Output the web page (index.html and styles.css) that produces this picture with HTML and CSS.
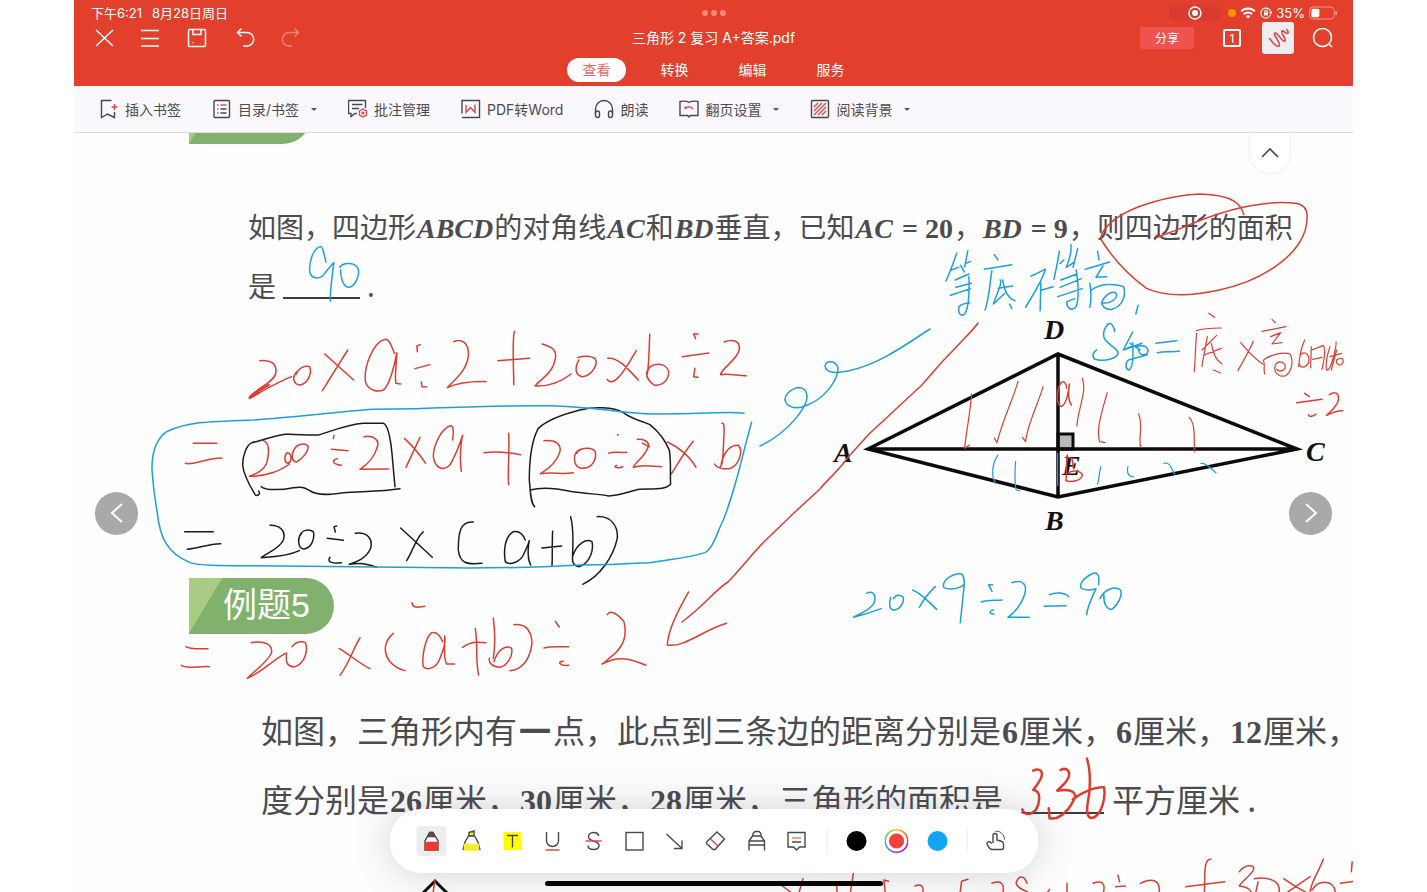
FILE: index.html
```html
<!DOCTYPE html>
<html lang="zh-CN">
<head>
  <meta charset="UTF-8" />
  <meta name="viewport" content="width=device-width, initial-scale=1" />
  <title>三角形 2 复习 A+答案.pdf</title>
  <link rel="stylesheet" href="styles.css">
</head>
<body>

<div class="app">

  <header class="header">
    <div class="status">
      <div class="status-left"><span>下午6:21</span><span>8月28日周日</span></div>
      <div class="dots"><i></i><i></i><i></i></div>
      <div class="status-right">
        <span class="record">
          <svg width="14" height="14" viewBox="0 0 14 14"><circle cx="7" cy="7" r="6" fill="none" stroke="#fff" stroke-width="1.4"/><circle cx="7" cy="7" r="3" fill="#fff"/></svg>
        </span>
        <span class="mic-dot"></span>
        <svg width="16" height="12" viewBox="0 0 16 12" fill="none" stroke="#fff" stroke-width="2"><path d="M1.2 4.4a9.6 9.6 0 0 1 13.6 0M3.8 7.2a6 6 0 0 1 8.4 0"/><path d="M5.8 9.3a3.2 3.2 0 0 1 4.4 0L8 11.6z" fill="#fff" stroke="none"/></svg>
        <svg width="12" height="12" viewBox="0 0 12 12" fill="none" stroke="#fff" stroke-width="1.1"><path d="M10.6 4.6A5 5 0 1 0 10.6 7.6M9.2 5.4l1.7.9 1-1.7"/><rect x="4" y="5.4" width="4" height="3" fill="#fff" stroke="none"/><path d="M4.8 5.6V4.4a1.2 1.2 0 0 1 2.4 0v1.2"/></svg>
        <span>35%</span>
        <svg width="28" height="14" viewBox="0 0 28 14"><rect x=".6" y="1" width="24.6" height="12" rx="3.4" fill="none" stroke="#f29a8f"/><rect x="2.4" y="2.8" width="8" height="8.4" rx="1.6" fill="#fff"/><path d="M26.4 5v4a2 2 0 0 0 0-4z" fill="#f29a8f"/></svg>
      </div>
    </div>

    <div class="title-row">
      <div class="title-left">
        <button class="icon-btn" aria-label="关闭"><svg viewBox="0 0 24 24"><path d="M4 4l17 16M21 4L4 20"/></svg></button>
        <button class="icon-btn" aria-label="菜单"><svg viewBox="0 0 24 24"><path d="M2 4.500h18M2 12.500h18M2 20h18"/></svg></button>
        <button class="icon-btn" aria-label="保存"><svg viewBox="0 0 24 24"><rect x="2.500" y="3.500" width="17" height="17" rx="1"/><path d="M7 4v4.500h8V4M6.500 16.500h1"/></svg></button>
        <button class="icon-btn" aria-label="撤销"><svg viewBox="0 0 24 24"><path d="M8.500 2.500L4.500 6.500l4 4M4.500 6.500H14a6.600 6.600 0 0 1 0 13.500H10"/></svg></button>
        <button class="icon-btn faded" aria-label="重做" disabled><svg viewBox="0 0 24 24"><path d="M14.500 2.500l4 4-4 4M18.500 6.500H9a6.600 6.600 0 0 0 0 13.500H12"/></svg></button>
      </div>
      <h1 class="title">三角形 2 复习 A+答案.pdf</h1>
      <div class="title-right">
        <button class="share">分享</button>
        <button class="page-btn" aria-label="页面"><span>1</span></button>
        <button class="pen-btn" aria-label="手写批注"><svg viewBox="0 0 32 32"><path d="M7 16c3 3 7 10 10 8 3-3-7-11-4-13 3-1 7 10 10 8 2-2-5-8-3-10 2-1 4 4 6 2 1-2-2-3-1-4"/></svg></button>
        <button class="icon-btn" aria-label="搜索"><svg viewBox="0 0 24 24"><circle cx="11.500" cy="11.500" r="9"/><path d="M18 18l3 3"/></svg></button>
      </div>
    </div>

    <nav class="tabs">
      <button class="tab active">查看</button>
      <button class="tab">转换</button>
      <button class="tab">编辑</button>
      <button class="tab">服务</button>
    </nav>
  </header>

  <div class="toolbar">
    <button class="tool"><svg viewBox="0 0 20 20"><path d="M12.500 1.500h-10v17l6-3.500 7 3.500V13"/><path class="red" d="M12.500 8h6M15.500 5v6"/></svg><span>插入书签</span></button>
    <button class="tool"><svg viewBox="0 0 20 20"><rect x="2" y="1.500" width="15.500" height="17" rx="1"/><path class="red" d="M5 6h1.500M5 10h1.500M5 14h1.500"/><path class="red" d="M8.500 6h6"/><path d="M8.500 10h6M8.500 14h6"/></svg><span>目录/书签</span><i class="caret"></i></button>
    <button class="tool"><svg viewBox="0 0 20 20"><path d="M17.500 9V1.500h-17v13H3v3l4-3h2M4 5.500h10.500M4 9.500h7"/><path class="red" d="M11.500 12l3.500-2 3.500 2v4l-3.500 2-3.500-2z"/><circle class="red" cx="15" cy="14" r=".8"/></svg><span>批注管理</span></button>
    <button class="tool"><svg viewBox="0 0 20 20"><path d="M1 14.500v-13h17.500v17H1"/><path class="red" d="M5 6v7.500l4.500-5 4.500 5V5.500"/></svg><span>PDF转Word</span></button>
    <button class="tool"><svg viewBox="0 0 20 20"><path d="M1.500 15v-5a8.500 8.500 0 0 1 17 0v5"/><rect x="1.500" y="12" width="4" height="6.500" rx="2"/><rect x="14.500" y="12" width="4" height="6.500" rx="2"/></svg><span>朗读</span></button>
    <button class="tool"><svg viewBox="0 0 20 20"><path d="M10 3.500C8 2 4 2 1 2.500v14h7.500l1.500 1.500 1.500-1.500H19v-14c-3-.5-7-.5-9 1"/><path class="red" d="M6 10c2-3 6-3 8 0M6.200 7.500V10"/></svg><span>翻页设置</span><i class="caret"></i></button>
    <button class="tool"><svg viewBox="0 0 20 20"><rect x="1.500" y="1.500" width="17" height="17" rx="1"/><path class="red" d="M4 8l4-4M4 12l8-8M4 16L16 4M8 16l8-8M12 16l4-4"/></svg><span>阅读背景</span><i class="caret"></i></button>
  </div>

  <main class="viewer">

    <article class="page">
      <div class="badge badge-top"></div>
      <p class="question">如图，四边形<i>ABCD</i>的对角线<i>AC</i>和<i>BD</i>垂直，已知<i>AC</i><b> = 20</b>，<i>BD</i><b> = 9</b>，则四边形的面积<br>是<span class="blank"></span>.</p>
      <h2 class="badge">例题5</h2>
      <p class="question large">如图，三角形内有<strong>一</strong>点，此点到三条边的距离分别是<b>6</b>厘米，<b>6</b>厘米，<b>12</b>厘米，<br>度分别是<b>26</b>厘米，<b>30</b>厘米，<b>28</b>厘米，三角形的面积是<span class="blank"></span>平方厘米 .</p>
    </article>

    <!-- Figure of the quadrilateral -->
    <svg class="layer" width="1279" height="759" viewBox="74 133 1279 759">
      <g fill="none" stroke="#0b0b0b" stroke-width="3.500">
        <rect x="1058" y="434" width="15" height="15" fill="#b9b9bd" stroke-width="3"/>
        <path d="M868 449L1058 354L1297 449L1058 497ZM868 449H1297M1058 354V497"/>
        <path d="M423 893L435 881L447 893" stroke-width="3"/>
      </g>
      <g class="point">
        <text x="834" y="462">A</text>
        <text x="1044" y="339">D</text>
        <text x="1306" y="461">C</text>
        <text x="1045" y="530">B</text>
        <text x="1062" y="475">E</text>
      </g>
    </svg>

    <!-- Freehand pen strokes -->
    <svg class="layer ink" width="1279" height="759" viewBox="74 133 1279 759" role="img" aria-label="手写批注">
      <g transform="matrix(.3954 0 0 .3333 150 190)">
        <path class="blue" d="M445 216C438 180 436 168 430 170C412 178 402 215 404 245C408 268 430 270 442 250C455 230 462 222 465 218C462 250 455 300 456 334M480 232C490 215 525 215 528 245C526 275 512 292 502 292C488 290 482 262 482 240"/>
        <path class="red" d="M278 512C305 510 322 520 318 550C312 580 260 600 252 624C290 600 325 575 358 560M372 545C358 560 362 584 380 585C400 580 410 550 404 530C390 525 375 535 370 552M442 492L515 570M500 480L436 602M618 490C610 465 605 448 595 448C565 455 540 530 545 575C550 600 575 608 590 600C605 590 620 520 624 488C624 520 618 560 622 580L634 582"/>
        <path class="red bold" d="M300 585C280 600 258 610 252 624L275 608"/>
        <path class="red" d="M684 464L675 468L676 485M670 536L708 524M686 576L688 590L700 591M768 455C790 445 808 460 805 500C800 545 765 575 752 593C780 578 815 574 850 575M880 512L960 505M922 424C915 440 920 540 920 584"/>
        <path class="red" d="M992 462C1015 470 1030 480 1025 505C1020 550 985 570 974 588C1010 590 1040 575 1065 552M1085 510C1070 540 1080 560 1095 560C1120 555 1135 520 1125 505C1115 497 1095 497 1082 503M1158 505C1185 500 1215 545 1235 570M1230 482C1210 520 1175 600 1156 568"/>
        <path class="red" d="M1264 432C1262 480 1262 540 1256 560M1256 548C1265 515 1305 515 1312 545C1312 575 1290 590 1275 585C1262 575 1256 560 1256 548M1386 432L1375 432L1380 446M1346 500L1413 489M1378 535L1375 560L1386 562M1452 456C1475 445 1495 455 1490 480C1485 510 1445 535 1443 554C1465 550 1490 558 1508 557"/>
      </g>

      <g transform="translate(150 390) scale(.3333)">
        <path class="red" d="M130 160L200 160M106 220C130 228 160 205 216 204M340 152C360 160 358 190 350 220C340 245 310 255 298 259C350 260 395 240 418 222M440 168C420 190 425 215 440 216C460 205 478 180 474 168C460 155 435 165 430 185M412 188C402 195 402 218 414 220C428 215 425 190 412 188M552 136L550 146M544 178L594 182M562 206C545 210 545 222 574 226M642 140C670 135 690 150 682 170C675 200 650 225 630 238L716 237"/>
        <path class="red" d="M764 146C785 165 810 195 827 220M810 142L768 232M908 150C912 120 910 105 900 108C875 115 850 165 850 200C855 235 880 245 900 225C915 200 930 160 938 136C930 170 930 220 934 244M1002 188C1040 182 1080 188 1112 194M1076 130C1080 180 1072 240 1076 284"/>
        <path class="red" d="M1182 152C1215 150 1235 160 1230 185C1222 215 1190 240 1172 251C1210 246 1240 254 1270 248M1290 178C1265 190 1270 232 1295 235C1330 236 1340 205 1336 185C1325 170 1290 172 1280 190M1402 134l3 1M1376 190C1390 182 1410 190 1430 187M1400 226C1385 232 1410 236 1418 230M1462 148C1478 145 1495 155 1496 165C1490 200 1455 215 1450 232C1480 222 1510 230 1535 230M1478 160L1498 170"/>
        <path class="red" d="M1552 156C1585 170 1620 200 1638 232M1630 154C1600 190 1585 220 1564 252M1716 100C1726 95 1722 130 1720 180C1718 210 1718 225 1710 232M1714 220C1725 180 1745 165 1765 166C1780 180 1770 220 1745 234C1725 240 1700 235 1694 222"/>
        <path class="black" d="M326 304C335 315 318 320 314 312C295 280 280 250 278 225C278 195 290 165 306 158C340 150 370 138 405 133C440 132 470 136 505 135C550 122 590 104 640 100L700 100C715 105 722 150 726 190L735 290M334 290C345 302 400 300 425 294C460 288 465 294 480 302C500 318 540 314 580 308C640 304 700 304 750 296"/>
        <path class="black" d="M1140 300C1180 290 1220 295 1260 304C1310 312 1350 312 1375 318C1420 316 1440 302 1470 298C1510 296 1550 300 1562 282C1560 250 1564 210 1558 180C1545 150 1520 120 1500 104C1475 92 1450 90 1420 68C1390 50 1330 50 1290 60C1230 75 1190 92 1165 115C1140 160 1138 230 1138 270C1142 310 1142 340 1154 350"/>
        <path class="black" d="M104 425L190 425M112 478C150 475 170 462 212 461M360 406C385 405 410 420 400 450C390 475 350 490 334 503C370 500 410 500 448 482M455 430C440 445 445 475 460 477C485 475 495 445 490 425C475 415 455 420 448 440M560 408L552 410L556 426M532 445L580 451M540 502C530 515 545 522 574 518M616 430C650 425 670 445 662 475C650 505 620 515 598 523C630 518 650 520 680 532M752 414L847 502M820 426C800 440 785 490 770 512"/>
        <path class="black" d="M970 396C930 392 925 430 925 480C930 520 950 525 996 520M1126 450C1118 430 1105 422 1090 425C1065 440 1060 480 1066 515C1080 528 1110 515 1120 495C1130 475 1136 460 1138 452C1132 480 1134 510 1142 525M1176 474L1235 468M1208 424C1206 460 1208 500 1206 528M1262 380C1275 430 1266 480 1268 515M1268 500C1280 460 1310 445 1326 455C1332 480 1320 520 1288 530C1270 528 1266 515 1268 500M1342 380C1385 378 1405 410 1402 445C1390 500 1350 560 1298 583"/>
        <path class="blue" d="M1782 70C1740 62 1700 72 1500 72C1400 68 1330 50 1200 47C1000 46 880 54 800 56L670 58C560 66 430 82 310 90C180 94 110 95 50 125C15 150 5 190 6 240C10 300 15 330 22 370C30 440 50 490 120 518C160 530 250 526 400 528L960 534C1100 534 1200 530 1290 525C1400 525 1460 520 1500 518C1580 505 1620 503 1665 488C1690 475 1700 430 1720 390C1760 290 1770 220 1805 97"/>
        <path class="red" d="M786 638C788 656 805 652 824 649M108 770C125 780 150 776 174 776M94 826C105 838 150 828 178 830M304 758C345 750 370 765 364 790C350 820 310 845 292 865C330 850 370 810 406 790M410 790C405 820 415 832 435 830C465 820 475 780 466 758C450 752 435 760 426 770M568 776C600 795 635 825 660 836M630 744C610 775 595 825 570 856"/>
        <path class="red" d="M730 730C700 755 700 790 720 815C735 832 750 838 765 842M878 755C870 735 860 725 845 728C825 745 815 800 820 830C835 845 860 830 868 810C880 780 888 760 884 738C885 770 880 810 890 822L914 822M938 772C960 755 980 755 1008 758M976 716C984 760 976 810 986 855M1030 685C1036 730 1034 780 1030 805M1032 815C1045 775 1070 765 1085 775C1090 800 1070 828 1050 832C1030 832 1015 820 1018 805M1092 704C1120 700 1145 715 1146 760C1140 810 1115 840 1080 842"/>
        <path class="red" d="M1216 694L1228 711M1182 774C1205 768 1230 772 1256 770M1240 814C1220 815 1230 828 1256 826M1372 674C1380 660 1400 668 1422 695C1432 735 1420 770 1390 795C1375 806 1365 818 1356 822C1400 800 1430 800 1488 826M1616 606C1580 670 1555 720 1552 765C1600 775 1660 720 1730 700"/>
      </g>

      <!-- connectors between the notes -->
      <path class="blue" d="M760 446C790 432 808 405 807 396C806 385 795 386 788 393C780 402 790 410 802 407C825 400 838 380 838 368C836 360 826 360 825 366C826 374 838 373 848 371C880 364 905 345 930 329"/>
      <path class="red" d="M978 323C970 335 955 345 921 386C905 400 885 420 870 433L850 455C835 475 822 485 820 489L795 512L768 538C755 550 740 570 728 582C715 590 705 605 682 622"/>

      <g transform="matrix(.3827 0 0 .3333 760 180)">
        <path class="red" d="M1264 104C1258 75 1240 45 1150 42C1080 45 970 75 920 125C900 145 888 165 892 180C930 250 980 300 1010 325C1060 350 1130 348 1200 330C1300 305 1400 240 1425 150C1435 100 1430 75 1400 70C1300 58 1200 95 1110 140C1080 155 1050 165 1036 173"/>
        <path class="blue" d="M514 220C505 250 495 280 486 303M500 270L518 262M543 212L535 260M538 250L550 244M524 256L534 276M510 300L546 282M512 322L552 310M498 346L550 326M546 290C548 350 545 385 534 404C520 410 518 395 520 380C528 370 540 370 548 368"/>
        <path class="blue" d="M612 224L622 240M586 268L658 254M606 272C600 310 600 350 588 390M628 300C635 310 618 340 610 372L640 340M622 325L660 318M634 300C640 340 650 355 666 362M652 372L658 386M708 288C730 280 740 268 746 268C735 310 710 350 694 382M734 310L732 392M736 330L766 320"/>
        <path class="blue" d="M782 214C778 250 772 275 768 298M784 250L794 240M812 194C816 220 806 245 800 262M830 206L818 262M800 262L822 246M786 300L828 282M784 322L840 296M778 350L842 326M826 270C832 310 835 350 826 380C815 395 800 385 802 365L822 356"/>
        <path class="blue" d="M882 214L886 240M850 268L914 246M896 258L878 292L906 290M862 310C866 340 864 370 862 382M866 330C890 310 925 310 950 320C958 350 945 380 920 388C900 390 888 375 896 360C910 335 930 330 932 345C930 365 905 372 892 368M988 376L982 402"/>
      </g>

      <g transform="matrix(.3444 0 0 .3333 820 310)">
        <path class="red thin" d="M440 252C438 300 425 360 420 415L434 405M575 214C560 270 530 330 514 398L506 384M648 230C630 290 600 350 597 395L588 382M762 205C775 250 750 290 746 348M834 248C820 300 800 360 812 395L828 398M925 312C940 350 922 390 932 412M1072 322C1090 340 1086 380 1087 424"/>
        <path class="red" d="M716 235C715 215 705 208 696 225C685 250 688 285 700 290C715 285 722 240 724 222C720 250 722 275 730 285M718 435C715 470 716 500 714 512C730 518 760 512 762 495C755 480 730 480 720 490M716 440L732 446L736 476"/>
        <path class="blue thin" d="M516 436C500 460 496 500 510 520M568 454C565 490 566 530 570 540L580 542M690 430L690 526M815 470C810 495 810 510 806 522M894 470C890 490 896 500 910 500M998 460C1020 455 1020 480 1030 492M1106 460C1125 458 1135 478 1150 488"/>
      </g>

      <g transform="translate(1070 300) scale(.3333)">
        <path class="blue" d="M134 95C130 70 118 62 108 80C85 120 120 130 140 150C160 175 100 185 75 178C65 170 68 158 80 150M188 96L160 150L182 140M160 150L216 130M188 128C190 160 190 200 178 210C165 208 165 190 175 180L232 164M200 140C230 130 240 150 230 162C215 168 205 160 205 148M180 130L210 150M258 130L320 122M262 158C290 152 300 158 328 154"/>
        <path class="red thin" d="M416 40L434 52M380 92C400 84 430 84 454 84M380 100C376 140 376 180 373 214M412 110C405 150 400 170 396 200M396 150L440 106M402 165L454 145M424 130C430 170 445 185 456 192M430 210L452 219M512 128C530 150 560 180 578 192M550 124C535 160 515 190 504 212M606 58L616 68M576 94L648 80M602 110L632 98L606 132L636 128M580 180C586 190 580 210 584 222M584 178C600 165 640 155 660 162C672 180 665 220 645 228C620 232 608 210 618 192C630 178 650 190 645 205C640 215 625 215 620 208"/>
        <path class="red thin" d="M704 120C690 150 688 180 686 200M690 165C705 150 722 165 715 190C705 205 690 205 688 190M724 140L722 204M726 150L760 136C770 150 760 190 756 208M728 178L756 172M780 140C770 170 765 190 770 210C785 215 800 130 798 126M780 170L815 160M800 180C822 165 825 190 812 195C800 195 798 185 800 180M784 210L800 150"/>
        <path class="red" d="M704 280L718 290M680 308L756 298M716 344C716 352 730 350 738 342M778 284C800 270 812 285 802 310C790 330 775 340 770 346C790 335 810 332 818 332"/>
      </g>

      <g transform="translate(650 540) scale(.3333)">
        <path class="blue" d="M650 160C670 150 680 165 672 190C655 215 625 222 610 232C640 225 670 215 694 206M722 172C715 200 722 212 735 210C755 205 765 180 758 170C745 162 735 168 730 176M788 150C815 160 840 190 860 208M856 140C840 155 820 180 808 202M944 132C925 150 890 150 880 140C880 115 915 98 935 102C948 115 942 140 938 180L931 248M1028 134L1016 134L1026 154M994 186C1015 178 1035 182 1056 180M1030 210C1015 215 1020 224 1032 222M1086 128C1115 118 1132 130 1125 160C1115 195 1090 220 1074 232L1138 232"/>
        <path class="blue" d="M1198 164C1220 155 1245 158 1256 170M1182 199L1248 197M1346 134C1350 100 1340 95 1325 102C1300 115 1285 135 1295 146C1310 152 1330 150 1338 146C1325 175 1312 200 1310 224M1362 165C1360 190 1370 208 1385 208C1405 195 1418 165 1412 150C1395 138 1365 145 1350 176"/>
      </g>

      <g transform="matrix(.389 0 0 .3333 750 690)">
        <path class="red bold" d="M728 242C745 232 755 245 748 265C740 285 730 295 728 300C750 302 745 340 735 360C720 378 705 375 700 358M798 240C815 230 825 245 818 265C808 285 795 295 790 302C830 295 845 310 830 335C815 370 790 390 770 385L768 355M866 206C876 240 876 300 868 340C864 375 870 385 880 384C905 375 915 320 910 292C890 290 855 305 830 328"/>
        <path class="red" d="M80 585L106 608M136 566L126 608M222 575L224 608M266 548L258 608M356 574L344 570L348 608M424 588C440 580 448 590 444 608M540 608L544 574L560 568M622 580C645 570 655 580 650 608M712 580C705 555 690 555 684 580C690 600 708 600 716 608M770 598L764 608M815 580L815 608M882 580C905 570 915 580 908 608M946 556L950 575M940 590L965 588M1004 580C1035 562 1055 570 1052 608"/>
        <path class="red" d="M1120 590L1220 575M1185 508C1165 505 1170 560 1168 608M1258 545C1270 525 1300 520 1294 540C1285 560 1262 575 1258 588C1280 590 1290 602 1288 612M1296 566C1330 560 1366 570 1360 608M1306 576L1300 608M1372 566C1400 590 1420 600 1430 608M1440 560L1380 608M1474 508C1460 550 1440 580 1440 608M1445 600C1460 570 1500 565 1505 608M1548 515L1546 545M1518 580L1552 574"/>
      </g>
      <path class="red" d="M435 880L433 893"/>
    </svg>

    <button class="collapse" aria-label="收起工具栏"><svg width="20" height="12" viewBox="0 0 20 12"><path d="M2 10l8-8 8 8"/></svg></button>
    <button class="flip prev" aria-label="上一页"><svg width="16" height="24" viewBox="0 0 16 24"><path d="M13 3L3 12l10 9"/></svg></button>
    <button class="flip next" aria-label="下一页"><svg width="16" height="24" viewBox="0 0 16 24"><path d="M3 3l10 9-10 9"/></svg></button>

    <div class="pen-bar">
      <div class="pens">
        <button class="pen active" aria-label="钢笔"><svg viewBox="0 0 24 24"><path d="M5.500 21v-9L10 3.500h3.500L18.500 12v9z" fill="#fff"/><path d="M9 7.500l2-4h2l2 4z" fill="#a33"/><path d="M6 13.500h12V21H6z" fill="#ee3a32" stroke="#ee3a32"/></svg></button>
        <button class="pen" aria-label="荧光笔"><svg viewBox="0 0 24 24"><path d="M9.500 3.500l5-1.500v5h-5z" fill="#fff02a"/><path d="M3.500 21l2-8 3.500-6h6l3.500 6 2 8" fill="#fff"/><path d="M5 15.500h14V21H5z" fill="#ffe92e" stroke="#ffe92e"/></svg></button>
        <button class="pen" aria-label="高亮文本"><svg viewBox="0 0 24 24"><path d="M3 3h18v18H3z" fill="#ff0" stroke="none"/><path d="M6.500 6.500h11M12 6.500v12"/></svg></button>
        <button class="pen" aria-label="下划线"><svg viewBox="0 0 24 24"><path d="M6 3v9a6 5.500 0 0 0 12 0V3"/><path class="red" d="M5 21h14"/></svg></button>
        <button class="pen" aria-label="删除线"><svg viewBox="0 0 24 24"><path d="M17 7c0-2-2-3.500-5-3.500S7 5.500 7 8c0 5 10.500 3 10.500 8.500 0 2.500-2.500 4-5.500 4s-5.500-1.500-5.500-4"/><path class="red" d="M4 12h16"/></svg></button>
        <button class="pen" aria-label="矩形"><svg viewBox="0 0 24 24"><rect x="3.500" y="3.500" width="17" height="17.500"/></svg></button>
        <button class="pen" aria-label="箭头"><svg viewBox="0 0 24 24"><path d="M4 5l15.500 14.500M19.500 11.500v8h-8"/></svg></button>
        <button class="pen" aria-label="橡皮擦"><svg viewBox="0 0 24 24"><path d="M13.500 3l7.500 7-9.500 10.500h-2L3 14.500v-1.500z"/><path class="red" d="M7 10l7.500 7"/></svg></button>
        <button class="pen" aria-label="马克笔"><svg viewBox="0 0 24 24"><path d="M4.500 21.500V12L8 7h8.500l3.500 5v9.500M4.500 12H20M4.500 16H20M8.500 7V4.500l2-2h4l2 2V7"/></svg></button>
        <button class="pen" aria-label="便签"><svg viewBox="0 0 24 24"><path d="M3.500 3.500h17V18h-5.500l-3 3-3-3H3.500z"/><path class="orange" d="M7.500 9h9"/><path d="M7.500 13h9"/></svg></button>
      </div>
      <div class="divider"></div>
      <div class="colors">
        <button class="color black" aria-label="黑色"></button>
        <button class="color red selected" aria-label="红色"></button>
        <button class="color blue" aria-label="蓝色"></button>
      </div>
      <div class="divider"></div>
      <button class="pen" aria-label="手势"><svg viewBox="0 0 24 24"><path d="M8.500 14V6.500a2 2 0 0 1 4 0V11l5 1.500c1.500.5 1.500 1.500 1.500 3V19c0 1-1 1.500-2 1.500H7.500c-2 0-4.500-4-5-6 0-2 1.500-2 3-1.500l2 1.500"/><path d="M11 2.500c4-1.500 9 3 9 8" stroke-width="1"/></svg></button>
    </div>
    <div class="home-bar"></div>
  </main>

</div>

</body>
</html>
```
FILE: styles.css
```css
* {
  box-sizing: border-box;
}
body {
  margin: 0;
  padding: 0 74px;
  background: #fff;
  color: #4b4b50;
  font-family: Inter, "Noto Sans CJK SC", sans-serif;
  font-size: 14px;
}
button {
  display: flex;
  align-items: center;
  justify-content: center;
  margin: 0;
  padding: 0;
  border: none;
  background: none;
  color: inherit;
  font: inherit;
  cursor: pointer;
}
svg {
  display: block;
  flex: none;
}
.app {
  display: flex;
  flex-direction: column;
  height: 100vh;
}

/* Red header */
.header {
  background: #e23f2c;
  color: #fff;
}
.status, .title-row {
  display: grid;
  grid-template-columns: 1fr auto 1fr;
  align-items: center;
}
.status {
  height: 21px;
  padding: 5px 16px 0;
  font-size: 13px;
  line-height: 16px;
}
.status-left {
  display: flex;
  gap: 10px;
  padding-left: 1px;
}
.dots {
  display: flex;
  gap: 3px;
}
.dots i {
  width: 6px;
  height: 6px;
  border-radius: 50%;
  background: #ff8a7a;
}
.status-right {
  display: flex;
  justify-content: flex-end;
  align-items: center;
  gap: 4px;
}
.record {
  display: flex;
  justify-content: center;
  width: 52px;
  padding: 1px 0;
  margin-right: 3px;
  border-radius: 9px;
  background: #d83b30;
}
.mic-dot {
  width: 8px;
  height: 8px;
  border-radius: 50%;
  background: #ff9500;
}
.title-row {
  height: 34px;
  padding: 0 18px;
}
.title-left, .title-right {
  display: flex;
  align-items: center;
}
.title-left {
  gap: 23px;
}
.title-right {
  justify-content: flex-end;
  gap: 17px;
}
.title {
  margin: 0;
  padding-bottom: 2px;
  font-size: 14px;
  font-weight: 400;
}
.icon-btn svg {
  width: 24px;
  height: 24px;
  fill: none;
  stroke: #fff;
  stroke-width: 1.5;
}
.faded {
  opacity: 0.35;
}
.share {
  width: 54px;
  height: 22px;
  margin-right: 12px;
  padding-bottom: 2px;
  border-radius: 2px;
  background: #ef5350;
  font-size: 12px;
}
.page-btn {
  width: 18px;
  height: 18px;
  margin-right: 4px;
  border: 2px solid #fff;
  border-radius: 2px;
  font-size: 12px;
}
.pen-btn {
  width: 32px;
  height: 32px;
  border-radius: 3px;
  background: #efedf0;
}
.pen-btn svg {
  width: 32px;
  height: 32px;
  fill: none;
  stroke: #d9474a;
  stroke-width: 1.6;
}
.tabs {
  display: flex;
  justify-content: center;
  align-items: center;
  gap: 19px;
  height: 31px;
  padding-bottom: 1px;
}
.tab {
  width: 59px;
  height: 24px;
  padding-bottom: 2px;
  border-radius: 12px;
}
.tab.active {
  background: #fff;
  color: #e8686a;
}

/* Light toolbar */
.toolbar {
  display: flex;
  align-items: center;
  gap: 31px;
  height: 47px;
  padding: 0 25px;
  border-bottom: 1px solid #dddbe0;
  background: #faf8fc;
}
.tool {
  gap: 6px;
  white-space: nowrap;
}
.tool svg {
  width: 20px;
  height: 20px;
  fill: none;
  stroke: #48484c;
  stroke-width: 1.4;
}
.tool .red, .pen .red {
  stroke: #e0484a;
}
.caret {
  margin-left: 6px;
  border: 3px solid transparent;
  border-top-color: #55555a;
  border-bottom: none;
}

/* Document */
.viewer {
  position: relative;
  flex: 1;
  min-height: 0;
  overflow: hidden;
  background: #fefefe;
}
.page {
  display: flow-root;
  padding-left: 115px;
}
.badge {
  width: 145px;
  height: 56px;
  margin: 263px 0 0;
  padding-left: 34px;
  border-radius: 0 28px 28px 0;
  background: linear-gradient(121deg, #a9cc84 0 28px, #80b26d 29px);
  color: #fff;
  font-family: "Liberation Sans", "Noto Sans CJK SC", sans-serif;
  font-size: 34px;
  font-weight: 400;
  line-height: 54px;
}
.badge-top {
  width: 122px;
  margin-top: -45px;
}
.question {
  margin: 53px 0 0;
  padding-left: 59px;
  color: #4c4c50;
  font-family: "Noto Sans CJK SC", sans-serif;
  font-size: 28px;
  line-height: 59px;
  white-space: nowrap;
}
.question i, .question b {
  margin: 0 1px;
  font-family: "Liberation Serif", serif;
  font-weight: 700;
  line-height: 1;
}
.question.large {
  margin-top: 61px;
  padding-left: 72px;
  font-size: 32px;
  line-height: 69px;
}
.question strong {
  margin: 0 2px;
  line-height: 1;
}
.blank {
  display: inline-block;
  width: 77px;
  height: 14px;
  margin: 0 7px;
  border-bottom: 2px solid #3c3c40;
  line-height: 1;
  vertical-align: -2px;
}
.large .blank {
  width: 83px;
  margin: 0 8px 0 18px;
}
.layer {
  position: absolute;
  top: 0;
  left: 0;
}
.point {
  fill: #111;
  font-family: "Liberation Serif", serif;
  font-size: 28px;
  font-style: italic;
  font-weight: 700;
}

/* Ink */
.ink path {
  fill: none;
  stroke-width: 1.5;
  stroke-linecap: round;
  stroke-linejoin: round;
  vector-effect: non-scaling-stroke;
}
.ink .red {
  stroke: #dc3d30;
}
.ink .blue {
  stroke: #1c9fdb;
}
.ink .black {
  stroke: #1c1c1c;
}
.ink .bold {
  stroke-width: 2.5;
}
.ink .thin {
  stroke-width: 1.2;
}

/* Controls lying over the document */
.collapse {
  position: absolute;
  top: 0;
  right: 63px;
  width: 40px;
  height: 40px;
  border-radius: 0 0 20px 20px;
  background: #fff;
  box-shadow: 0 0 3px rgba(60, 60, 80, 0.14);
}
.collapse svg {
  fill: none;
  stroke: #48484c;
  stroke-width: 1.6;
}
.flip {
  position: absolute;
  top: 50%;
  width: 43px;
  height: 43px;
  margin-top: -21px;
  border-radius: 50%;
  background: #a9a8aa;
}
.flip svg {
  fill: none;
  stroke: #fff;
  stroke-width: 2;
}
.prev {
  left: 21px;
}
.next {
  right: 21px;
}
.pen-bar {
  position: absolute;
  bottom: 19px;
  left: 50%;
  display: flex;
  align-items: center;
  height: 64px;
  padding: 0 27px;
  border-radius: 32px;
  background: #fff;
  box-shadow: 0 0 40px rgba(60, 50, 75, 0.24);
  transform: translateX(-50%);
}
.pens, .colors {
  display: flex;
  justify-content: space-between;
}
.pens {
  width: 396px;
}
.colors {
  width: 111px;
}
.pen, .color {
  width: 30px;
  height: 30px;
  border-radius: 4px;
}
.pen.active {
  background: #ededee;
}
.pen svg {
  width: 24px;
  height: 24px;
  fill: none;
  stroke: #48484c;
  stroke-width: 1.4;
}
.pen .orange {
  stroke: #e8863c;
}
.divider {
  width: 1px;
  height: 24px;
  margin: 0 14px;
  background: #ececee;
}
.color::before {
  content: "";
  width: 20px;
  height: 20px;
  border-radius: 50%;
}
.color.black::before {
  background: #000;
}
.color.blue::before {
  background: #12a5f4;
}
.color.selected::before {
  width: 24px;
  height: 24px;
  background:
    radial-gradient(circle, #f44336 7px, #fff 8px 10px, transparent 11px),
    conic-gradient(#ffc400, #ff5722, #d500a0, #7a3cff, #2aa0ff, #4cd964, #ffc400);
}
.home-bar {
  position: absolute;
  bottom: 6px;
  left: 50%;
  width: 338px;
  height: 5px;
  border-radius: 3px;
  background: #000;
  transform: translateX(-50%);
}
```
